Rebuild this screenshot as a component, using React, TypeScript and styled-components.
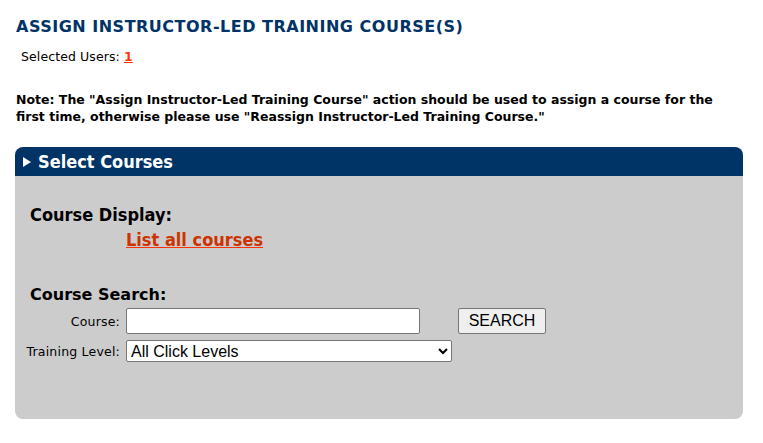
import React from 'react';
import styled, { createGlobalStyle } from 'styled-components';

const GlobalStyle = createGlobalStyle`
  body {
    margin: 0;
    background: #ffffff;
    font-family: "DejaVu Sans", Verdana, sans-serif;
    color: #000;
  }
`;

const Page = styled.div`
  padding: 17px 20px 0 15px;
  width: 763px;
  box-sizing: border-box;
`;

const Title = styled.h1`
  margin: 0 0 0 1px;
  font-size: 16px;
  line-height: 20px;
  font-weight: bold;
  letter-spacing: 0.5px;
  color: #003366;
`;

const SelectedUsers = styled.div`
  margin: 12px 0 0 6px;
  font-size: 12.5px;
  line-height: 16px;
  letter-spacing: 0.1px;
`;

const UserCount = styled.a`
  color: #ff3300;
  font-weight: bold;
  text-decoration: underline;
`;

const Note = styled.p`
  margin: 26px 0 0 1px;
  width: 716px;
  font-size: 12.5px;
  line-height: 17px;
  font-weight: bold;
`;

const Panel = styled.section`
  margin-top: 22px;
  width: 728px;
`;

const PanelHeader = styled.div`
  display: flex;
  align-items: center;
  height: 29px;
  padding-left: 8px;
  background: #003366;
  border-radius: 8px 8px 0 0;
  color: #fff;
  font-family: "DejaVu Sans Condensed", "DejaVu Sans", sans-serif;
  font-weight: bold;
  font-size: 18px;
`;

const Arrow = styled.span`
  width: 0;
  height: 0;
  border-top: 5px solid transparent;
  border-bottom: 5px solid transparent;
  border-left: 8px solid #fff;
  margin-right: 7px;
`;

const PanelBody = styled.div`
  height: 243px;
  box-sizing: border-box;
  padding: 29px 0 0 15px;
  background: #cccccc;
  border-radius: 0 0 8px 8px;
`;

const SectionLabel = styled.div<{ condensed?: boolean }>`
  font-family: ${p => (p.condensed ? '"DejaVu Sans Condensed", "DejaVu Sans", sans-serif' : '"DejaVu Sans", sans-serif')};
  font-size: ${p => (p.condensed ? '18px' : '16px')};
  line-height: 20px;
  font-weight: bold;
`;

const ListLink = styled.a`
  display: inline-block;
  margin: 5px 0 0 96px;
  font-family: "DejaVu Sans Condensed", "DejaVu Sans", sans-serif;
  font-size: 18px;
  line-height: 20px;
  font-weight: bold;
  color: #cc3300;
  text-decoration: underline;
  text-decoration-color: #ff3300;
`;

const SearchBlock = styled.div`
  margin-top: 35px;
`;

const FormGrid = styled.div`
  display: grid;
  grid-template-columns: 94px auto;
  column-gap: 6px;
  row-gap: 6px;
  margin: 3px 0 0 -4px;
  align-items: center;
`;

const FieldLabel = styled.label`
  text-align: right;
  font-family: "DejaVu Sans", Verdana, sans-serif;
  font-size: 12.5px;
  letter-spacing: 0.2px;
  color: #000;
  white-space: nowrap;
`;

const FieldRow = styled.div`
  display: flex;
  align-items: center;
  gap: 38px;
`;

const TextInput = styled.input`
  width: 294px;
  height: 26px;
  box-sizing: border-box;
  border: 1px solid #767676;
  border-radius: 2px;
  background: #fff;
  padding: 1px 2px;
  font-family: "Liberation Sans", Arial, sans-serif;
  font-size: 16px;
`;

const SearchButton = styled.button`
  width: 88px;
  height: 26px;
  box-sizing: border-box;
  border: 1px solid #767676;
  border-radius: 2px;
  background: #efefef;
  font-family: "Liberation Sans", Arial, sans-serif;
  font-size: 16px;
  color: #000;
  padding: 0;
`;

const LevelSelect = styled.select`
  width: 326px;
  height: 22px;
  box-sizing: border-box;
  border: 1px solid #767676;
  border-radius: 2px;
  background: #fff;
  font-family: "Liberation Sans", Arial, sans-serif;
  font-size: 16px;
  color: #000;
`;

export default function App() {
  return (
    <>
      <GlobalStyle />
      <Page>
        <Title>ASSIGN INSTRUCTOR-LED TRAINING COURSE(S)</Title>
        <SelectedUsers>
          Selected Users: <UserCount href="#">1</UserCount>
        </SelectedUsers>
        <Note>
          Note: The "Assign Instructor-Led Training Course" action should be used to assign a course for the
          first time, otherwise please use "Reassign Instructor-Led Training Course."
        </Note>
        <Panel>
          <PanelHeader>
            <Arrow />
            Select Courses
          </PanelHeader>
          <PanelBody>
            <SectionLabel condensed>Course Display:</SectionLabel>
            <ListLink href="#">List all courses</ListLink>
            <SearchBlock>
              <SectionLabel>Course Search:</SectionLabel>
              <FormGrid>
                <FieldLabel htmlFor="course">Course:</FieldLabel>
                <FieldRow>
                  <TextInput id="course" type="text" />
                  <SearchButton type="button">SEARCH</SearchButton>
                </FieldRow>
                <FieldLabel htmlFor="level">Training Level:</FieldLabel>
                <LevelSelect id="level" defaultValue="all">
                  <option value="all">All Click Levels</option>
                </LevelSelect>
              </FormGrid>
            </SearchBlock>
          </PanelBody>
        </Panel>
      </Page>
    </>
  );
}
